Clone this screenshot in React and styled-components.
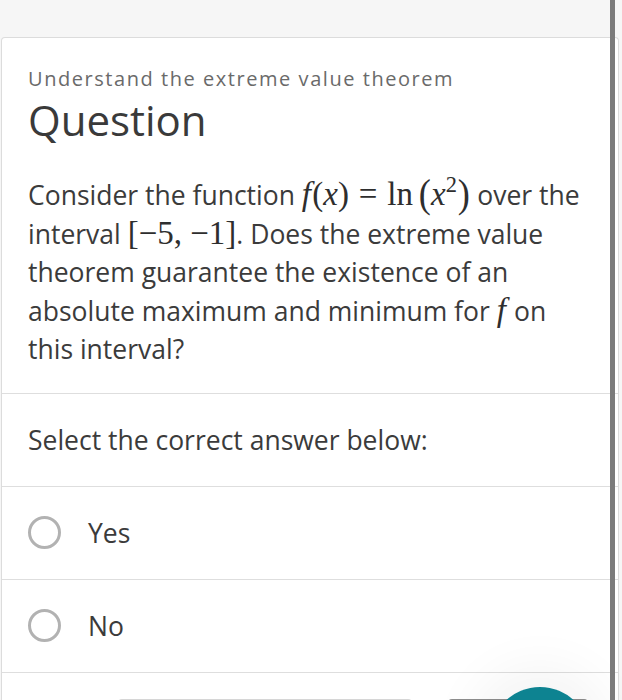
import React from "react";
import styled, { createGlobalStyle } from "styled-components";

const GlobalStyle = createGlobalStyle`
  html, body {
    margin: 0;
    padding: 0;
    background: #f6f6f6;
  }
  body {
    font-family: "Open Sans", "Noto Sans", sans-serif;
    color: #3b3b3b;
  }
`;

const Page = styled.div`
  position: relative;
  display: flex;
  flex-direction: column;
  width: 622px;
  height: 700px;
  overflow: hidden;
  background: #f6f6f6;
  padding-top: 37px;
  box-sizing: border-box;
`;

const ScrollRail = styled.div`
  position: absolute;
  top: 0;
  left: 610px;
  width: 5px;
  height: 100%;
  background: #7b7b7b;
  z-index: 5;
`;

const Card = styled.div`
  flex: 1;
  display: flex;
  flex-direction: column;
  margin-left: 1px;
  width: 618px;
  box-sizing: border-box;
  background: #fff;
  border: 1px solid #dcdcdc;
  border-bottom: none;
  border-radius: 4px 4px 0 0;
`;

const Header = styled.div`
  padding: 29px 26px 0;
`;

const Subtitle = styled.div`
  font-size: 20px;
  line-height: 24px;
  letter-spacing: 1.55px;
  color: #6a6a6a;
`;

const Title = styled.h1`
  margin: 3px 0 0;
  font-size: 42px;
  line-height: 52px;
  font-weight: 400;
  color: #3a3a3a;
`;

const Prompt = styled.p`
  margin: 0;
  padding: 30px 24px 24px 26px;
  font-size: 26.5px;
  line-height: 38.5px;
  color: #3b3b3b;
`;

const Math = styled.span`
  font-family: "Liberation Serif", "Times New Roman", serif;
  font-size: 33px;
  line-height: 28px;
  color: #2e2e2e;
  white-space: nowrap;
`;

const Var = styled.i`
  font-style: italic;
  margin-right: ${(p) => (p.$tight ? "0" : "0.04em")};
`;

const Rel = styled.span`
  margin: 0 0.3em;
`;

const Op = styled.span`
  margin-right: 0.14em;
`;

const Paren = styled.span`
  display: inline-block;
  font-size: 1.22em;
  transform: scaleX(0.9);
  vertical-align: -0.06em;
  line-height: 0;
`;

const Sup = styled.sup`
  font-size: 0.68em;
  vertical-align: 0.6em;
  line-height: 0;
`;

const Row = styled.div`
  display: flex;
  align-items: center;
  height: 93px;
  padding: 0 26px;
  border-top: 1px solid #dedede;
  box-sizing: border-box;
  font-size: 26.5px;
  color: #3b3b3b;
`;

const Radio = styled.span`
  width: 27px;
  height: 27px;
  border: 3px solid #b2b2b2;
  border-radius: 50%;
  flex-shrink: 0;
  margin-right: 27px;
`;

const Footer = styled.div`
  position: relative;
  flex: 1;
  border-top: 1px solid #dedede;
`;

const FooterButton = styled.div`
  position: absolute;
  top: 26px;
  height: 20px;
  border-top: 2px solid ${(p) => (p.$dark ? "#8e8e8e" : "#d6d6d6")};
  border-radius: 4px 4px 0 0;
  left: ${(p) => p.$left}px;
  width: ${(p) => p.$width}px;
`;

const Fab = styled.div`
  position: absolute;
  top: 14px;
  left: 488px;
  width: 100px;
  height: 100px;
  border-radius: 50%;
  background: #0d8391;
  box-shadow: 0 0 50px 22px rgba(0, 0, 0, 0.045);
`;

const App = () => {
  return (
    <>
      <GlobalStyle />
      <Page>
        <ScrollRail />
        <Card>
          <Header>
            <Subtitle>Understand the extreme value theorem</Subtitle>
            <Title>Question</Title>
          </Header>
          <Prompt>
            Consider the function{" "}
            <Math>
              <Var>f</Var>(<Var $tight>x</Var>)<Rel>=</Rel>
              <Op>ln</Op>
              <Paren>(</Paren>
              <Var $tight>x</Var>
              <Sup>2</Sup>
              <Paren>)</Paren>
            </Math>{" "}
            over the interval <Math>[−5, −1]</Math>. Does the extreme value
            theorem guarantee the existence of an absolute maximum and minimum
            for <Math><Var>f</Var></Math> on this interval?
          </Prompt>
          <Row>Select the correct answer below:</Row>
          <Row>
            <Radio />
            Yes
          </Row>
          <Row>
            <Radio />
            No
          </Row>
          <Footer>
            <FooterButton $left={116} $width={294} />
            <FooterButton $left={446} $width={140} $dark />
            <Fab />
          </Footer>
        </Card>
      </Page>
    </>
  );
};

export default App;
